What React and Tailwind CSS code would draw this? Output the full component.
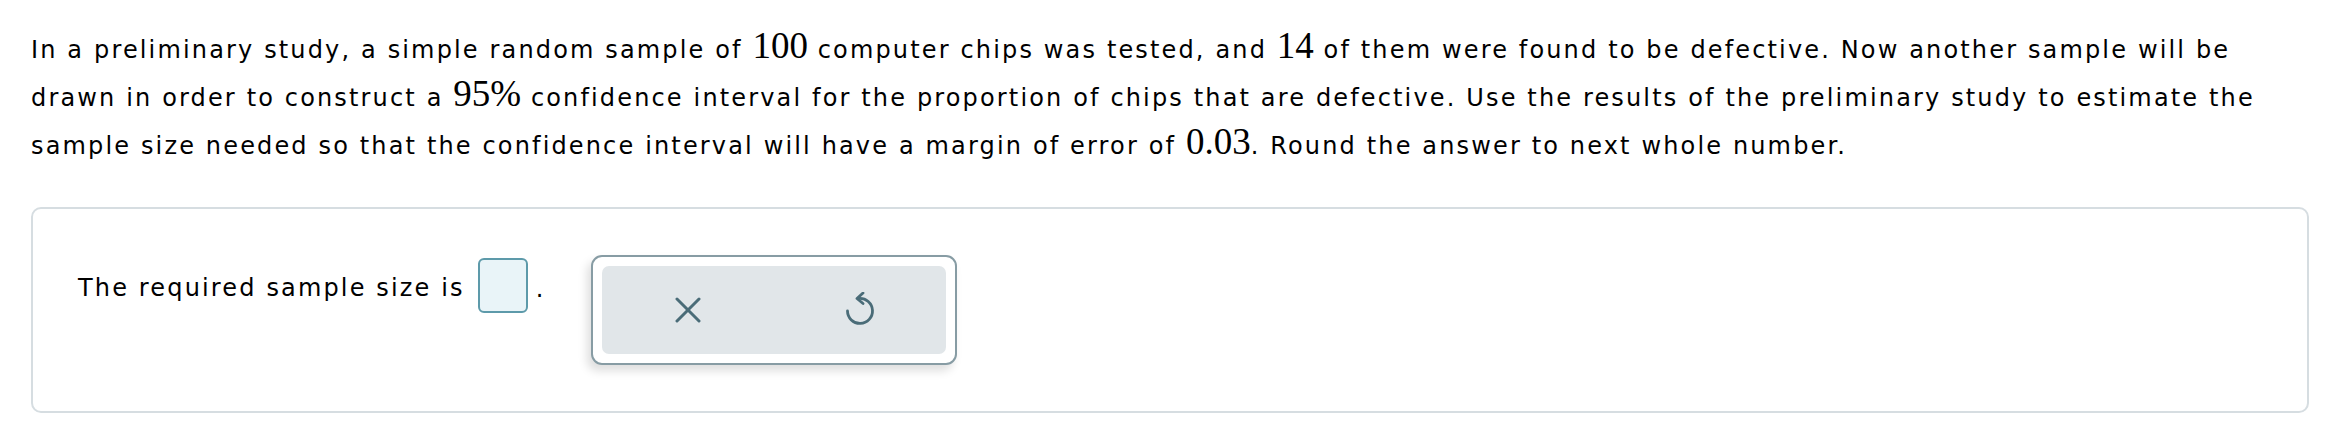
function Num({ children }) {
  return (
    <span className="font-['Liberation_Serif',serif] text-[37px] leading-none tracking-normal">{children}</span>
  )
}

function UndoIcon() {
  return (
    <svg width="34" height="36" viewBox="-17 -19 34 36" fill="none" stroke="#4a6c78" strokeWidth="2.8" strokeLinecap="round" strokeLinejoin="round">
      <path d="M-1 -12.5 A12.5 12.5 0 1 1 -12.5 0" />
      <path d="M3 -18 L-3 -12.5 L3 -7.5" />
    </svg>
  )
}

function XIcon() {
  return (
    <svg width="26" height="26" viewBox="0 0 26 26" fill="none" stroke="#4a6c78" strokeWidth="3" strokeLinecap="round">
      <path d="M2 2 L24 24" />
      <path d="M24 2 L2 24" />
    </svg>
  )
}

export default function App() {
  return (
    <div className="min-h-screen bg-white text-black font-['DejaVu_Sans',Verdana,sans-serif] pt-[26px] px-[31px]">
      <p className="text-[24px] leading-[48px] tracking-[2.15px] w-[2250px]">
        In a preliminary study, a simple random sample of <Num>100</Num> computer chips was tested, and <Num>14</Num> of them
        were found to be defective. Now another sample will be drawn in order to construct a <Num>95%</Num> confidence
        interval for the proportion of chips that are defective. Use the results of the preliminary study to estimate
        the sample size needed so that the confidence interval will have a margin of error of <Num>0.03</Num>. Round the
        answer to next whole number.
      </p>

      <div className="mt-[37px] w-[2278px] h-[206px] border-2 border-[#d6dde1] rounded-[10px] pt-[46px] pl-[45px] flex items-start">
        <div className="flex items-center mt-[3px] h-[55px]">
          <span className="text-[24px] leading-none tracking-[2.15px] mt-[5px]">The required sample size is</span>
          <div className="ml-[13px] w-[50px] h-[55px] border-2 border-[#5d9aaa] bg-[#e9f4f8] rounded-[6px]" />
          <span className="ml-[8px] text-[24px] leading-none mt-[6px]">.</span>
        </div>

        <div className="ml-[48px] w-[366px] h-[110px] border-2 border-[#879ca4] rounded-[11px] bg-white p-[9px] shadow-[-4px_6px_10px_rgba(0,0,0,0.13)]">
          <div className="w-full h-full bg-[#e1e6e9] rounded-[7px] flex">
            <button className="flex-1 flex items-center justify-center">
              <XIcon />
            </button>
            <button className="flex-1 flex items-center justify-center">
              <UndoIcon />
            </button>
          </div>
        </div>
      </div>
    </div>
  )
}
